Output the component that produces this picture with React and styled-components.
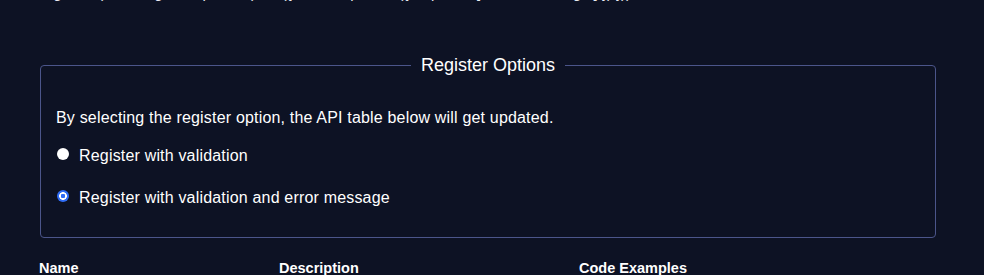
import React, { useState } from "react";
import styled, { createGlobalStyle } from "styled-components";

const Global = createGlobalStyle`
  html, body { margin: 0; padding: 0; background: #0d1224; }
  body { font-family: "Liberation Sans", Arial, Helvetica, sans-serif; color: #ffffff; }
  * { box-sizing: border-box; }
`;

const Page = styled.div`
  width: 984px;
  height: 275px;
  overflow: hidden;
  background: #0d1224;
  padding: 0 48px 0 40px;
  display: flex;
  flex-direction: column;
`;

const Signature = styled.div`
  margin-top: -15px;
  height: 16px;
  font-size: 15px;
  line-height: 16px;
  color: #e8eaf2;
  white-space: nowrap;
`;

const Fieldset = styled.fieldset`
  margin: 54px 0 0 0;
  padding: 12px 15px 29px 15px;
  border: 1px solid #4b558a;
  border-radius: 4px;
  min-width: 0;
`;

const Legend = styled.legend`
  margin: 0 auto;
  padding: 0 10px;
  font-size: 18px;
  font-weight: 300;
  color: #ffffff;
  line-height: 20px;
`;

const Intro = styled.p`
  margin: 21px 0 0 0;
  font-size: 16px;
  letter-spacing: 0.18px;
  line-height: 20px;
  color: #ffffff;
`;

const Options = styled.div`
  display: flex;
  flex-direction: column;
  gap: 22px;
  margin-top: 18px;
`;

const Option = styled.label`
  display: flex;
  align-items: center;
  gap: 10px;
  font-size: 16px;
  letter-spacing: 0.18px;
  line-height: 20px;
  color: #ffffff;
  cursor: pointer;
`;

const Radio = styled.input.attrs({ type: "radio" })`
  appearance: none;
  -webkit-appearance: none;
  margin: 0 0 0 1px;
  width: 12px;
  height: 12px;
  border-radius: 50%;
  background: #ffffff;
  position: relative;
  top: -2px;
  flex: none;
  &:checked {
    background: radial-gradient(circle, #2f6cf5 0 2px, #ffffff 2.5px 3.6px, #2f6cf5 4.1px);
  }
`;

const TableHead = styled.div`
  display: grid;
  grid-template-columns: 240px 300px 1fr;
  margin: 21px 0 0 -1px;
  font-size: 14.5px;
  font-weight: 700;
  line-height: 18px;
  color: #ffffff;
`;

export default function App() {
  const [value, setValue] = useState("error");
  return (
    <>
      <Global />
      <Page>
        <Signature>
          register: (Ref, RegisterOptions?) =&gt; (&#123; name, options: (&#123; required: [ value, message ] &#125;) &#125;))
        </Signature>
        <Fieldset>
          <Legend>Register Options</Legend>
          <Intro>By selecting the register option, the API table below will get updated.</Intro>
          <Options>
            <Option>
              <Radio name="opt" checked={value === "validation"} onChange={() => setValue("validation")} />
              Register with validation
            </Option>
            <Option>
              <Radio name="opt" checked={value === "error"} onChange={() => setValue("error")} />
              Register with validation and error message
            </Option>
          </Options>
        </Fieldset>
        <TableHead>
          <div>Name</div>
          <div>Description</div>
          <div>Code Examples</div>
        </TableHead>
      </Page>
    </>
  );
}
